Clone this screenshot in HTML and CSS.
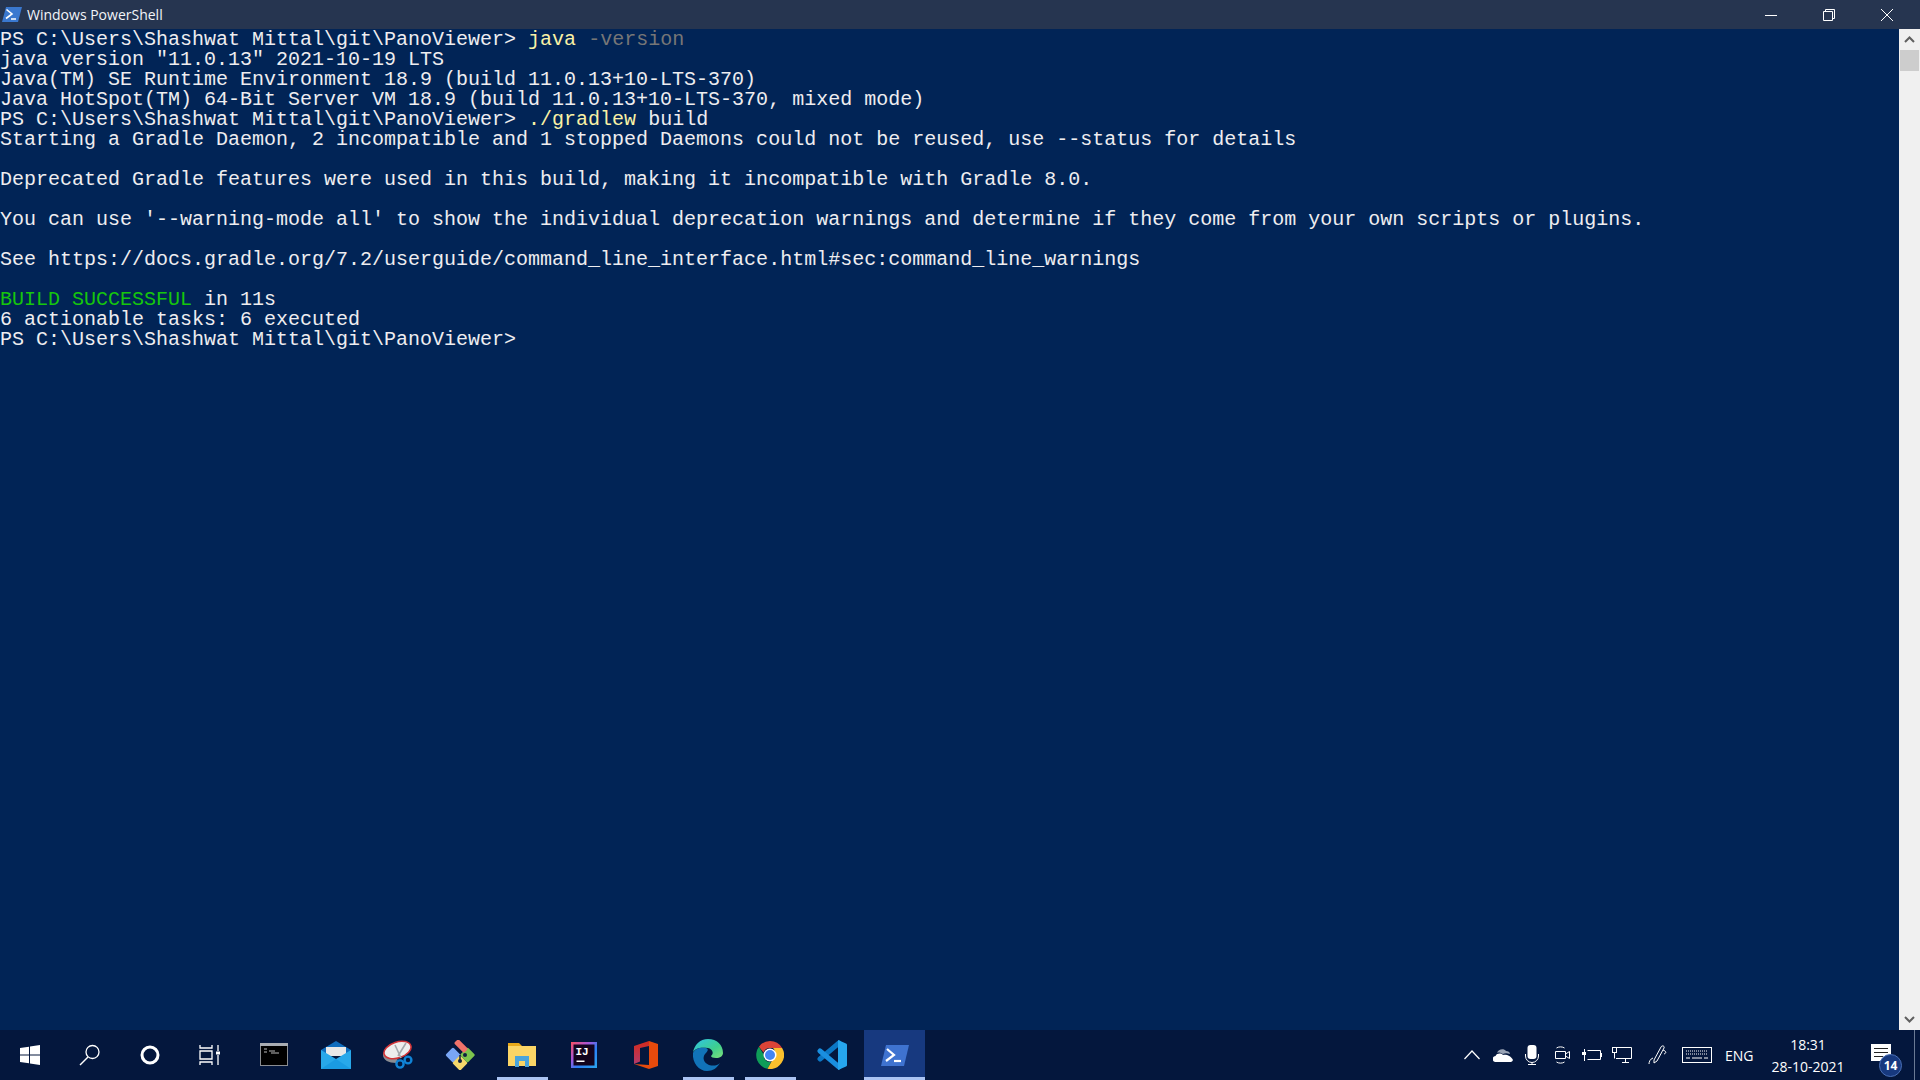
FILE: index.html
```html
<!DOCTYPE html>
<html lang="en">
<head>
<meta charset="utf-8">
<title>Windows PowerShell</title>
<link rel="stylesheet" href="styles.css">
</head>
<body>
<div class="window">
  <header class="titlebar">
    <svg class="title-icon" viewBox="0 0 20 15"><path fill="#3a78cf" d="M4 0h16l-4 15H0z"/><path fill="none" stroke="#fff" stroke-width="1.600" d="M4.500 2.500 10 7l-6 4.500"/><path stroke="#fff" stroke-width="1.500" d="M9 12h5"/></svg>
    <span class="title-text">Windows PowerShell</span>
    <div class="win-controls">
      <button class="win-btn"><svg viewBox="0 0 12 12" width="12" height="12"><path stroke="#fff" d="M0 6.500h12"/></svg></button>
      <button class="win-btn"><svg viewBox="0 0 12 12" width="12" height="12"><path fill="none" stroke="#fff" d="M.5 2.500h9v9h-9zM2.500 2.500v-2h9v9h-2"/></svg></button>
      <button class="win-btn"><svg viewBox="0 0 12 12" width="12" height="12"><path stroke="#fff" d="M0 0l12 12M12 0 0 12"/></svg></button>
    </div>
  </header>
  <main class="console-wrap">
<pre class="console">PS C:\Users\Shashwat Mittal\git\PanoViewer&gt; <span class="cmd">java</span> <span class="param">-version</span>
java version "11.0.13" 2021-10-19 LTS
Java(TM) SE Runtime Environment 18.9 (build 11.0.13+10-LTS-370)
Java HotSpot(TM) 64-Bit Server VM 18.9 (build 11.0.13+10-LTS-370, mixed mode)
PS C:\Users\Shashwat Mittal\git\PanoViewer&gt; <span class="cmd">./gradlew</span> build
Starting a Gradle Daemon, 2 incompatible and 1 stopped Daemons could not be reused, use --status for details

Deprecated Gradle features were used in this build, making it incompatible with Gradle 8.0.

You can use '--warning-mode all' to show the individual deprecation warnings and determine if they come from your own scripts or plugins.

See https://docs.gradle.org/7.2/userguide/command_line_interface.html#sec:command_line_warnings

<span class="ok">BUILD SUCCESSFUL</span> in 11s
6 actionable tasks: 6 executed
PS C:\Users\Shashwat Mittal\git\PanoViewer&gt;</pre>
    <div class="scrollbar">
      <svg class="arrow" viewBox="0 0 21 21"><path fill="none" stroke="#606060" stroke-width="2" d="M6 13l4.500-4.500L15 13"/></svg>
      <div class="thumb"></div>
      <div class="track"></div>
      <svg class="arrow" viewBox="0 0 21 21"><path fill="none" stroke="#606060" stroke-width="2" d="M6 8l4.500 4.500L15 8"/></svg>
    </div>
  </main>
  <footer class="taskbar">
    <div class="sys-buttons">
      <div class="sys-btn"><svg width="20" height="20" viewBox="0 0 20 20"><path fill="#fff" d="M0 3l9-1.300V9.500H0zM10 1.500 20 0v9.500H10zM0 10.500h9v7.800L0 17zM10 10.500h10V20l-10-1.500z"/></svg></div>
      <div class="sys-btn"><svg width="22" height="22" viewBox="0 0 22 22"><circle cx="13.500" cy="8" r="6.500" fill="none" stroke="#fff" stroke-width="1.300"/><path stroke="#fff" stroke-width="1.500" d="M9 13 1 21"/></svg></div>
      <div class="sys-btn"><svg width="20" height="20" viewBox="0 0 20 20"><circle cx="10" cy="10" r="8" fill="none" stroke="#fff" stroke-width="3"/></svg></div>
      <div class="sys-btn"><svg width="22" height="20" viewBox="0 0 22 20"><path fill="none" stroke="#fff" stroke-width="1.300" d="M1 0v3h12V0M1 20v-3h12v3M1 6h12v8H1zM19 0v6M19 10v10"/><rect x="17" y="6.500" width="4" height="3" fill="#fff"/></svg></div>
    </div>
    <div class="apps">
      <div class="app"><svg width="28" height="24" viewBox="0 0 28 24"><rect x=".5" y=".5" width="27" height="22" fill="#000" stroke="#8a8d92"/><rect x="0" y="0" width="28" height="3" fill="#a9adb3"/><path stroke="#bbb" d="M4 6h3M4 9h3M9 8h6M11 10h8"/></svg></div>
      <div class="app"><svg width="30" height="28" viewBox="0 0 30 28"><path fill="#0f6cbd" d="M0 9 15 0l15 9v4H0z"/><path fill="#e8e8e8" d="M5 6h20v9H5z"/><path fill="#28a8ea" d="M0 9l15 9L30 9v19H0z"/><path fill="#0f8fdc" d="M15 18l15 10H0z" opacity=".55"/></svg></div>
      <div class="app"><svg width="30" height="30" viewBox="0 0 30 30"><path fill="#8a8d92" d="M0 12c2 5 7 7 15 6l-2 5C6 23 0 20 0 15z"/><ellipse cx="14.500" cy="10" rx="14" ry="8" fill="#eeeeee" stroke="#d13438" stroke-width="1.600" transform="rotate(-18 14.500 10)"/><path stroke="#a4a8ad" stroke-width="1.600" d="M12 5l6 13M23 3 15 16"/><circle cx="17" cy="24" r="3.600" fill="none" stroke="#1083d6" stroke-width="2.400"/><circle cx="25" cy="20" r="3.400" fill="none" stroke="#1083d6" stroke-width="2.400"/></svg></div>
      <div class="app"><svg width="30" height="30" viewBox="0 0 30 30"><rect x="2.500" y="9.500" width="11" height="11" rx="1.500" fill="#79a6f6" transform="rotate(45 8 15)"/><rect x="9.500" y="17.500" width="11" height="11" rx="1.500" fill="#f6d86b" transform="rotate(45 15 23)"/><rect x="17" y="9.500" width="11" height="11" rx="1.500" fill="#7dc44d" transform="rotate(45 22.500 15)"/><rect x="9" y="3" width="14" height="6" rx="1.500" fill="#f0726a" transform="rotate(45 16 6)"/><circle cx="20" cy="15" r="2" fill="#10203f"/><circle cx="15" cy="21" r="2" fill="#10203f"/><path stroke="#10203f" stroke-width="1.500" d="M15 21v-6"/></svg></div>
      <div class="app"><svg width="28" height="24" viewBox="0 0 28 24"><path fill="#e8a91b" d="M0 0h11l3 3H0z"/><path fill="#fbd566" d="M0 3h28v20H0z"/><path fill="#4aa4dc" d="M7 24V13h14v11h-4v-6h-6v6z"/></svg></div>
      <div class="app"><svg width="26" height="26" viewBox="0 0 26 26"><defs><linearGradient id="ij" x1="0" y1="0" x2="1" y2="1"><stop offset="0" stop-color="#f9505f"/><stop offset=".35" stop-color="#a855d8"/><stop offset=".6" stop-color="#2b7ef5"/><stop offset="1" stop-color="#2ba6ee"/></linearGradient></defs><rect width="26" height="26" fill="url(#ij)"/><rect x="2.500" y="2.500" width="21" height="21" fill="#12041e"/><text x="4.500" y="13" class="ij-text">IJ</text><rect x="5.500" y="18.500" width="8" height="1.500" fill="#fff"/></svg></div>
      <div class="app"><svg width="24" height="28" viewBox="0 0 24 28"><defs><linearGradient id="off" x1="0" y1="0" x2="0" y2="1"><stop offset="0" stop-color="#d42a1c"/><stop offset="1" stop-color="#b23a6b"/></linearGradient></defs><path fill="#e64a0c" d="M15 0l9 3v22l-9 3L0 23l15 1z"/><path fill="url(#off)" d="M15 0 0 5v18l6-2.500V7l9-2z"/></svg></div>
      <div class="app"><svg width="32" height="32" viewBox="0 0 32 32"><defs><linearGradient id="eg" x1="0" y1="0" x2="1" y2="1"><stop offset="0" stop-color="#2fc3e8"/><stop offset=".6" stop-color="#3ecf8e"/><stop offset="1" stop-color="#7ee07a"/></linearGradient></defs><path fill="url(#eg)" d="M1 14C2 6 8 0 16 0c9 0 15 6 15 14 0 3-3 5-7 5-3 0-5-1-5-2 3-2 2-7-3-8C9 8 2 9 1 14z"/><path fill="#1173b8" d="M1 14c2-5 8-6 13-5 3 1 2 3-1 6-3 4-1 9 4 11 4 1 8 1 11-2-3 5-7 8-13 8C7 32 0 24 1 14z"/></svg></div>
      <div class="app"><svg width="28" height="28" viewBox="0 0 28 28"><path fill="#db4437" d="M14 0a14 14 0 0 1 12.100 7H14a7 7 0 0 0-6.500 4.400L2.900 5.800A14 14 0 0 1 14 0z"/><path fill="#0f9d58" d="M2.900 5.800 8 14a6 6 0 0 0 7 7l-3.500 6.800A14 14 0 0 1 2.900 5.800z"/><path fill="#fbc02d" d="M26.100 7A14 14 0 0 1 11.500 27.800L18 16a7 7 0 0 0-1-9z"/><circle cx="14" cy="14" r="6.500" fill="#fff"/><circle cx="14" cy="14" r="5" fill="#4285f4"/></svg></div>
      <div class="app"><svg width="30" height="30" viewBox="0 0 30 30"><path stroke="#0b76c4" stroke-width="5" stroke-linecap="round" d="M22 3 3 19"/><path stroke="#1a8fe0" stroke-width="5" stroke-linecap="round" d="M3 11l19 16"/><path fill="#26a6ee" d="M21 0l8 3.500a1.500 1.500 0 0 1 1 1.500v20a1.500 1.500 0 0 1-1 1.500L21 30z"/></svg></div>
      <div class="app active"><svg width="28" height="21" viewBox="0 0 28 21"><path fill="#3f73d0" d="M5 0h23l-5 21H0z"/><path fill="none" stroke="#fff" stroke-width="2.200" d="M6 4l7 6-8 6"/><path stroke="#fff" stroke-width="2.200" d="M13 16h7"/></svg></div>
    </div>
    <div class="tray">
      <svg class="t-chev" width="16" height="10" viewBox="0 0 16 10"><path fill="none" stroke="#fff" stroke-width="1.200" d="M.5 9 8 1l7.500 8"/></svg>
      <svg class="t-cloud" width="20" height="14" viewBox="0 0 20 14"><path fill="#fff" d="M3 14a3 3 0 0 1-.5-6C4 5 8 5 10 7c2-1 8 0 10 5a3 3 0 0 1-2 2z"/><path fill="#9aa4b5" d="M4 5C5 1 11 0 13 3c2 0 4 1 4 3-3-1-5-1-7 0-2-1-4-2-6-1z"/></svg>
      <svg class="t-mic" width="14" height="20" viewBox="0 0 14 20"><rect x="2.500" y="0" width="9" height="14" rx="3" fill="#fff"/><path fill="none" stroke="#fff" d="M.5 9v2a6.500 6.500 0 0 0 13 0V9M7 17.500V20M3 19.500h8"/></svg>
      <svg class="t-cam" width="15" height="18" viewBox="0 0 15 18"><path fill="none" stroke="#fff" d="M1.500 2c2-1.500 6-1.500 8 0M1.500 16c2 1.500 6 1.500 8 0M.5 5.500h10v7H.5zM10.500 8l4-2.500v7l-4-2.500"/></svg>
      <svg class="t-batt" width="20" height="12" viewBox="0 0 20 12"><path fill="none" stroke="#fff" d="M5.500 1.500h13v9h-13M19.500 4v4"/><path fill="#fff" d="M2 0h1v3h1v3H3v6H2V6H0V3h2z"/></svg>
      <svg class="t-net" width="20" height="16" viewBox="0 0 20 16"><path fill="none" stroke="#fff" d="M4 .5h15.500v11H4M10 15.500h7M13.500 11.500v4"/><rect x=".5" y=".5" width="4" height="5" fill="none" stroke="#fff"/><path stroke="#fff" d="M2.500 5.500v6"/></svg>
      <svg class="t-pen" width="20" height="20" viewBox="0 0 20 20"><path fill="none" stroke="#fff" d="M6 15 13 2c1-2 4-1 3 1L9 16l-3 2zM15 5c3 1 4 3 1 4M5 13c-3 1-4 4-4 6"/></svg>
      <svg class="t-kbd" width="30" height="16" viewBox="0 0 30 16"><rect x=".5" y=".5" width="29" height="15" fill="none" stroke="#fff"/><path stroke="#fff" stroke-dasharray="1 1" d="M4 4h22M4 7h22"/><path stroke="#fff" d="M4 11h4M10 11h10M22 11h4"/></svg>
      <span class="lang">ENG</span>
      <div class="clock"><span>18:31</span><span>28-10-2021</span></div>
      <div class="notif">
        <svg width="20" height="18" viewBox="0 0 20 18"><path fill="#fff" d="M0 0h20v17H0z"/><path stroke="#222" d="M3 4.500h14M3 8.500h14M3 12.500h9"/></svg>
        <span class="badge">14</span>
      </div>
      <div class="show-desktop"></div>
    </div>
  </footer>
</div>
</body>
</html>
```
FILE: styles.css
```css
html, body {
  margin: 0;
  padding: 0;
  height: 100%;
  overflow: hidden;
}
.window {
  display: flex;
  flex-direction: column;
  height: 1080px;
  background: #012456;
}
.titlebar {
  height: 29px;
  flex: none;
  display: flex;
  align-items: center;
  background: #263550;
  color: #f2f4f8;
  font-family: "Open Sans", sans-serif;
  font-size: 14px;
}
.title-icon {
  width: 20px;
  height: 15px;
  margin: 0 5px 0 2px;
}
.win-controls {
  margin-left: auto;
  margin-right: 4px;
  display: flex;
}
.win-btn {
  width: 58px;
  height: 29px;
  padding: 0;
  border: 0;
  background: none;
  display: flex;
  align-items: center;
  justify-content: center;
}
.console-wrap {
  flex: 1;
  display: flex;
  min-height: 0;
}
.console {
  flex: 1;
  margin: 0;
  padding-top: 1px;
  font-family: "Liberation Mono", monospace;
  font-size: 20px;
  line-height: 20px;
  color: #eeedf0;
  white-space: pre;
}
.cmd { color: #f9f1a5; }
.param { color: #767676; }
.ok { color: #16c60c; }
.scrollbar {
  width: 21px;
  flex: none;
  background: #f0f0f0;
  display: flex;
  flex-direction: column;
  align-items: center;
}
.arrow {
  width: 21px;
  height: 21px;
  flex: none;
}
.thumb {
  width: 19px;
  height: 21px;
  flex: none;
  background: #cdcdcd;
}
.track { flex: 1; }
.taskbar {
  height: 50px;
  flex: none;
  display: flex;
  align-items: stretch;
  background: #04173d;
  color: #fff;
  font-family: "Open Sans", sans-serif;
}
.sys-buttons {
  display: flex;
  width: 243px;
  flex: none;
}
.sys-btn {
  width: 60px;
  display: flex;
  align-items: center;
  justify-content: center;
}
.apps { display: flex; flex: none; }
.app {
  width: 62px;
  display: flex;
  align-items: center;
  justify-content: center;
  position: relative;
}
.app:nth-child(5)::after,
.app:nth-child(8)::after,
.app:nth-child(9)::after,
.app.active::after {
  content: "";
  position: absolute;
  left: 5.5px;
  right: 5.5px;
  bottom: 0;
  height: 3px;
  background: #abc4f3;
}
.app.active {
  width: 61px;
  margin-left: 1px;
  background: #17397f;
}
.app.active::after {
  left: 0;
  right: 0;
}
.ij-text {
  font-family: "Liberation Mono", monospace;
  font-size: 11px;
  font-weight: 700;
  fill: #fff;
}
.tray {
  flex: 1;
  min-width: 0;
  display: flex;
  align-items: center;
  font-size: 14px;
}
.t-chev { margin-left: 539px; }
.t-cloud { margin-left: 13px; }
.t-mic { margin-left: 12px; }
.t-cam { margin-left: 16px; }
.t-batt { margin-left: 12px; }
.t-net { margin-left: 10px; }
.t-pen { margin-left: 16px; }
.t-kbd { margin-left: 14px; }
.lang {
  margin-left: 13px;
  width: 28px;
  text-align: center;
}
.clock {
  margin-left: 15px;
  width: 80px;
  display: flex;
  flex-direction: column;
  align-items: center;
  gap: 3px;
  line-height: 19px;
}
.notif {
  margin-left: 23px;
  position: relative;
  width: 20px;
  height: 18px;
  margin-top: -5px;
}
.badge {
  position: absolute;
  left: 8px;
  top: 10px;
  width: 21px;
  height: 21px;
  line-height: 21px;
  border-radius: 50%;
  border: 1px solid #4a6fb5;
  background: #17397f;
  text-align: center;
  font-size: 12px;
  font-weight: 700;
}
.show-desktop {
  margin-left: auto;
  margin-right: 5px;
  width: 1px;
  height: 50px;
  background: #6a7a94;
}
```
